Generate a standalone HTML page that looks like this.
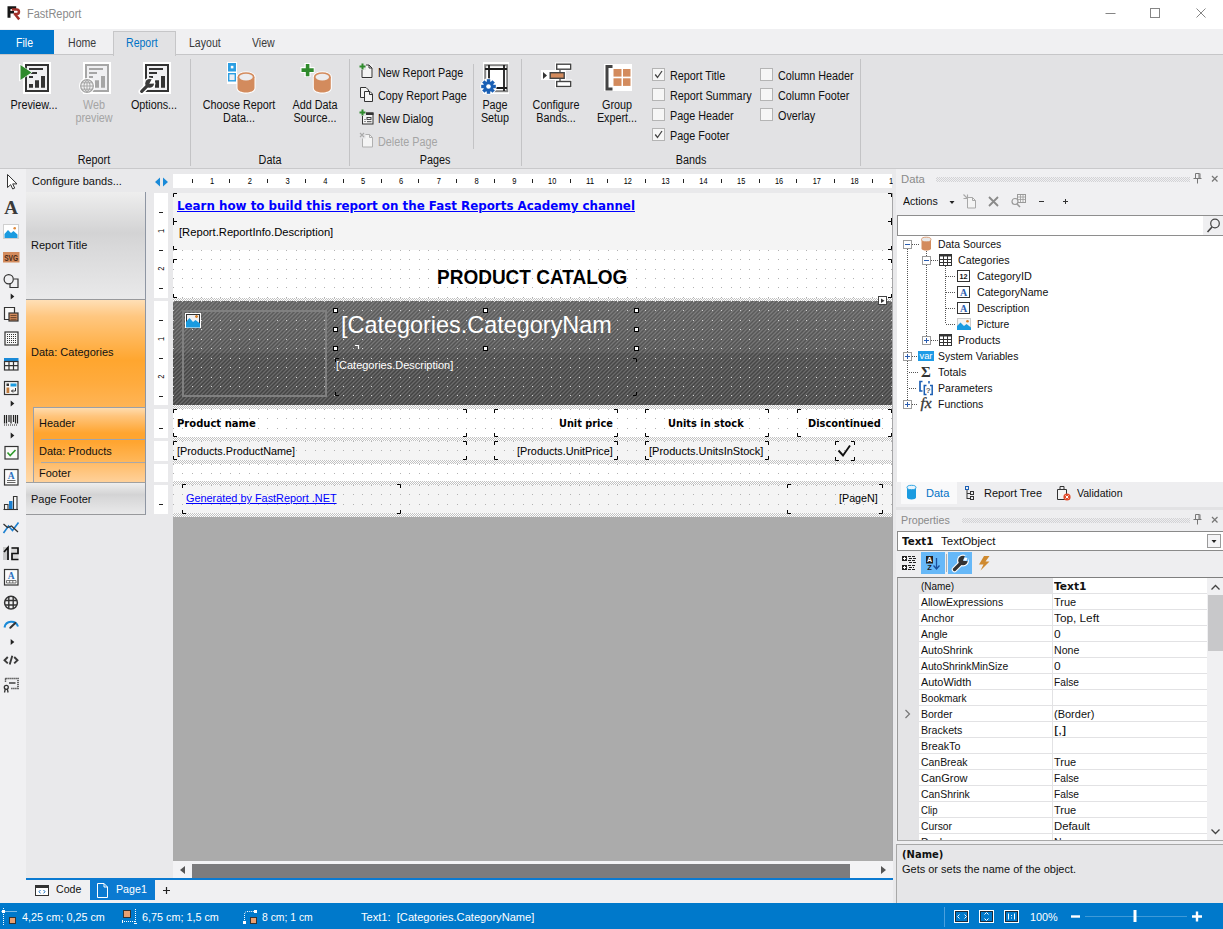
<!DOCTYPE html>
<html><head><meta charset="utf-8"><title>FastReport</title>
<style>
*{box-sizing:border-box;margin:0;padding:0}
html,body{width:1223px;height:929px;overflow:hidden;background:#e9e9eb}
body{position:relative;font-family:"Liberation Sans",sans-serif;font-size:11px;color:#000;line-height:1}
.a{position:absolute}
.t{position:absolute;white-space:nowrap}
svg{position:absolute;overflow:visible}

.c{position:absolute;white-space:nowrap;font-size:12px;color:#111;text-align:center;line-height:13px;transform:translateX(-50%) scaleX(.9)}
.l{position:absolute;white-space:nowrap;font-size:12px;color:#111;line-height:13px;transform:scaleX(.9);transform-origin:0 0}
.g{color:#a5a5a5}
.ih{fill:#fff}

.band{position:absolute;border-right:1px solid #8e96a3;border-bottom:1px solid #98999c}
.bg{background:linear-gradient(#eeeeee 0%,#d3d3d4 38%,#d8d8d9 50%,#e9e9ea 100%)}
.bo{background:linear-gradient(#ffdfb6 0%,#ffc57d 18%,#ffa530 55%,#ffa833 70%,#ffba5e 100%)}
.bt{position:absolute;white-space:nowrap;font-size:11px;color:#111;transform-origin:0 0}
.vr{position:absolute;left:154px;width:14px;background:#fff}
.hs{position:absolute;left:173px;width:719px;height:3px;background:repeating-conic-gradient(#c2c2c2 0 25%,#fff 0 50%) 0 0/2px 2px}

.dots{position:absolute;left:0;top:0;width:100%;height:100%}
.pb{position:absolute;left:173px;width:719px;overflow:hidden}
.dt{position:absolute;white-space:nowrap;font-size:10.670px;color:#000;transform-origin:0 50%}
.cm{position:absolute;width:4px;height:4px;border:0 solid #000}
.dj{font-family:"DejaVu Sans","Liberation Sans",sans-serif}
.pt{position:absolute;white-space:nowrap;font-size:11px;line-height:13px;color:#111;transform-origin:0 50%}
.grip{position:absolute;height:5px;background:repeating-conic-gradient(#d2d2d5 0 25%,transparent 0 50%) 0 0/2px 2px}
/* title */
#title{left:0;top:0;width:1223px;height:29px;background:#fff}
#tabs{z-index:2;left:0;top:29px;width:1223px;height:25px;background:#f0f0f2}
#ribbon{left:0;top:54px;width:1223px;height:115px;background:#e2e2e4;border-top:1px solid #c6c6c8;border-bottom:1px solid #c9c9cb}
.rt{position:absolute;white-space:nowrap;font-size:12px;color:#111;text-align:center;line-height:13px;transform:translateX(-50%)}
.rl{position:absolute;white-space:nowrap;font-size:12px;color:#111;line-height:13px}
.gray{color:#a3a3a3}
.sep{position:absolute;width:1px;background:#c3c3c5}
.cb{position:absolute;width:13px;height:13px;background:#f6f6f6;border:1px solid #b4b4b4}
#status{left:0;top:904px;width:1223px;height:25px;background:#0072c6;color:#fff}
</style></head><body>
<!--TITLE-->
<div id="title" class="a">
<svg style="left:6px;top:5px" width="16" height="16" viewBox="0 0 16 16"><path d="M1.500 1.300h8.700v2.700H4.500v2h3.500v2.600H4.500v4.200h-3z" fill="#161616"/><path d="M5.800 4.500h4.900a2.250 2.250 0 0 1 0 4.500h-3M8.900 9l4.300 5.400" fill="none" stroke="#a3312a" stroke-width="2.500"/></svg>
<span class="t" style="left:27px;top:8px;font-size:12.5px;color:#8a8a8a;transform:scaleX(.88);transform-origin:0 0">FastReport</span>
<svg style="left:1100px;top:0" width="123" height="29"><path d="M5.500 13.500h10" stroke="#858585" fill="none"/><rect x="50.500" y="8.500" width="9" height="9" stroke="#858585" fill="none"/><path d="M96.500 8.500l9 9m0-9l-9 9" stroke="#858585" fill="none"/></svg>
</div>
<!--TABS-->
<div id="tabs" class="a">
<div class="a" style="left:0;top:1px;width:54px;height:24px;background:#0077cc"></div>
<span class="t" style="left:16px;top:8px;font-size:12px;transform:scaleX(.88);transform-origin:0 0;color:#fff">File</span>
<span class="t" style="left:68px;top:8px;font-size:12px;transform:scaleX(.88);transform-origin:0 0;color:#3a3a3a">Home</span>
<div class="a" style="left:113px;top:2px;width:63px;height:25px;background:#e2e2e4;border:1px solid #c6c6c8;border-bottom:none"></div>
<span class="t" style="left:126px;top:8px;font-size:12px;transform:scaleX(.88);transform-origin:0 0;color:#0072c6">Report</span>
<span class="t" style="left:189px;top:8px;font-size:12px;transform:scaleX(.88);transform-origin:0 0;color:#3a3a3a">Layout</span>
<span class="t" style="left:252px;top:8px;font-size:12px;transform:scaleX(.88);transform-origin:0 0;color:#3a3a3a">View</span>
</div>
<!--RIBBON-->
<div id="ribbon" class="a">
<svg width="0" height="0" style="left:0;top:0"><defs>
<g id="rep"><rect x="4" y="0" width="28" height="32" fill="#fff"/><rect x="7" y="3" width="22" height="26" fill="#f0f0f2" stroke="currentColor" stroke-width="2"/><path d="M10 7h14M10 11h8M10 15h4" stroke="currentColor" stroke-width="1.800" fill="none"/><path d="M10 22h4v3.800h-4zM16 18.200h4v7.600h-4zM22 14h4v11.800h-4z" fill="currentColor"/></g>
<g id="cyl"><path d="M-1 5.500c0-7.500 19-7.500 19 0v11c0 7.500-19 7.500-19 0z" fill="#fff"/><path d="M0 5.500v11c0 6 17 6 17 0v-11z" fill="#d38b5d"/><ellipse cx="8.500" cy="5.500" rx="8.500" ry="4.800" fill="#d38b5d"/><ellipse cx="8.500" cy="5.600" rx="6.800" ry="3.400" fill="#ececee"/></g>
<g id="pg"><path d="M1.500 1.500h7l3 3v9.500h-10z" fill="#f4f4f4" stroke="currentColor"/><path d="M8.500 1.500v3h3" fill="none" stroke="currentColor"/></g>
<g id="plus"><path d="M2 0h2v2h2v2h-2v2h-2v-2h-2v-2h2z" fill="#2f8a2c"/></g>
</defs></svg>
<!-- group Report -->
<svg style="left:19px;top:7px;color:#333" width="32" height="32"><use href="#rep"/><path d="M0 1.500v18l13.500-9z" fill="#fff"/><path d="M1.500 3v15l11-7.500z" fill="#2f8a2c"/></svg>
<span class="c" style="left:34px;top:44px">Preview...</span>
<svg style="left:79px;top:7px;color:#a6a6a6" width="32" height="32"><use href="#rep"/><circle cx="8" cy="24" r="8" fill="#fff"/><circle cx="8" cy="24" r="6.300" fill="#f2f2f2" stroke="#a6a6a6" stroke-width="1.300"/><path d="M1.700 24h12.600M8 17.700v12.600M8 17.700c-4 3-4 9.600 0 12.600M8 17.700c4 3 4 9.600 0 12.600M2.800 20.800h10.400M2.800 27.200h10.400" stroke="#a6a6a6" fill="none" stroke-width="1"/></svg>
<span class="c g" style="left:94px;top:44px">Web<br>preview</span>
<svg style="left:139px;top:7px;color:#333" width="32" height="32"><use href="#rep"/><path d="M2.500 29.600l7-7" stroke="#fff" stroke-width="6" stroke-linecap="round"/><circle cx="10.600" cy="21.400" r="5.800" fill="#fff"/><path d="M2.700 29.400l7-7" stroke="#3a3a3a" stroke-width="3.200" stroke-linecap="round"/><circle cx="10.600" cy="21.400" r="4.400" fill="#3a3a3a"/><path d="M10.300 21.700l2.200-4.200 3.800 0.200 -0.600 3.700z" fill="#fff"/></svg>
<span class="c" style="left:154px;top:44px">Options...</span>
<span class="c" style="left:94px;top:99px">Report</span>
<div class="sep" style="left:190px;top:4px;height:107px"></div>
<!-- group Data -->
<svg style="left:224px;top:7px" width="32" height="32"><rect x="3" y="0" width="10" height="22" fill="#fff"/><rect x="4" y="1" width="8" height="8.500" fill="#2b9ee2"/><rect x="6.800" y="3.800" width="2.600" height="2.600" fill="#fff"/><rect x="4.700" y="11.700" width="6.600" height="7.100" fill="#e8eef4" stroke="#2b9ee2" stroke-width="1.400"/><use href="#cyl" x="13.500" y="9.500"/></svg>
<span class="c" style="left:239px;top:44px">Choose Report<br>Data...</span>
<svg style="left:300px;top:7px" width="32" height="32"><path d="M4.500 1h6v4h4v6h-4v4h-6v-4h-4v-6h4z" fill="#fff"/><path d="M5.800 2h3.600v4.300h4.300v3.600h-4.300v4.300h-3.600v-4.300h-4.300v-3.600h4.300z" fill="#2f8a2c"/><use href="#cyl" x="13.800" y="9.500"/></svg>
<span class="c" style="left:315px;top:44px">Add Data<br>Source...</span>
<span class="c" style="left:270px;top:99px">Data</span>
<div class="sep" style="left:349px;top:4px;height:107px"></div>
<!-- group Pages -->
<svg style="left:359px;top:8px;color:#333" width="16" height="16"><rect x="1" y="1" width="13" height="15" fill="#f1f1f1" opacity=".7"/><use href="#pg" x="1.500" y="0.500"/><rect x="0" y="0" width="7" height="7" fill="#e2e2e4"/><use href="#plus" x="0.500" y="0.500"/></svg>
<span class="l" style="left:378px;top:12px">New Report Page</span>
<svg style="left:359px;top:31px;color:#333" width="16" height="16"><path d="M1.500 1.500h5.500l2.500 2.500v7.500h-8z" fill="#f4f4f4" stroke="#333"/><path d="M5.500 5.500h5.500l2.500 2.500v7.500h-8z" fill="#f4f4f4" stroke="#333"/><path d="M10.500 5.500v3h3" fill="none" stroke="#333"/></svg>
<span class="l" style="left:378px;top:35px">Copy Report Page</span>
<svg style="left:359px;top:54px;color:#333" width="16" height="16"><rect x="3.500" y="4" width="10.500" height="11" fill="#f4f4f4" stroke="#333"/><rect x="3" y="3.500" width="11.500" height="2.500" fill="#333"/><path d="M5.500 10.500h1M5.500 12.500h1" stroke="#333"/><rect x="8" y="8.500" width="4" height="2" fill="none" stroke="#333" stroke-width=".9"/><path d="M8 12.700h4.500" stroke="#333" stroke-width=".9"/><rect x="0" y="0" width="7" height="7" fill="#e2e2e4"/><use href="#plus" x="0.500" y="0.500"/></svg>
<span class="l" style="left:378px;top:58px">New Dialog</span>
<svg style="left:359px;top:77px;color:#b0b0b0" width="16" height="16"><use href="#pg" x="2" y="1"/><rect x="0" y="0" width="6.500" height="6.500" fill="#e2e2e4"/><path d="M1 1l4 4M5 1l-4 4" stroke="#aaa" stroke-width="1.100"/></svg>
<span class="l g" style="left:378px;top:81px">Delete Page</span>
<div class="sep" style="left:473px;top:9px;height:85px"></div>
<svg style="left:479px;top:7px" width="32" height="32"><rect x="4" y="0" width="26" height="32" fill="#fff"/><rect x="6.200" y="3.200" width="22" height="26" fill="#fff" stroke="#858585" stroke-width="2"/><path d="M10 3v26M25 3v26M6 7h22M6 26h22" stroke="#1c1c1c" stroke-width="1.800" fill="none"/><circle cx="9.500" cy="24.500" r="8.300" fill="#fff"/><g transform="translate(9.500 24.500)" fill="#1a5fb4"><circle r="5.200"/><g id="tooth"><rect x="-1.700" y="-7.300" width="3.400" height="14.600"/></g><use href="#tooth" transform="rotate(45)"/><use href="#tooth" transform="rotate(90)"/><use href="#tooth" transform="rotate(135)"/><circle r="2.300" fill="#fff"/></g></svg>
<span class="c" style="left:495px;top:44px">Page<br>Setup</span>
<span class="c" style="left:435px;top:99px">Pages</span>
<div class="sep" style="left:521px;top:4px;height:107px"></div>
<!-- group Bands -->
<svg style="left:540px;top:7px" width="32" height="32"><rect x="15" y="0.500" width="17" height="8" fill="#fff"/><rect x="1" y="8" width="25" height="10" fill="#fff"/><rect x="15" y="17.500" width="17" height="8.500" fill="#fff"/><rect x="16.700" y="2.200" width="14" height="5" fill="#fff" stroke="#444" stroke-width="1.400"/><rect x="10.200" y="10.700" width="14" height="5.600" fill="#d38b5d" stroke="#444" stroke-width="1.400"/><rect x="16.700" y="19.500" width="14" height="5" fill="#fff" stroke="#444" stroke-width="1.400"/><path d="M3 10v7l4-3.500z" fill="#333"/><path d="M20 8v2.500M20 17v2" stroke="#444" stroke-width="1.200"/></svg>
<span class="c" style="left:556px;top:44px">Configure<br>Bands...</span>
<svg style="left:602px;top:7px" width="32" height="32"><rect x="2" y="2" width="28" height="27" fill="#fff"/><path d="M10.500 4.500h-5.500v22.500h5.500" fill="none" stroke="#444" stroke-width="3"/><rect x="11.500" y="7" width="8" height="7.600" fill="#d38b5d"/><rect x="21" y="7" width="7.500" height="7.600" fill="#d38b5d"/><rect x="11.500" y="16.300" width="8" height="7.600" fill="#d38b5d"/><rect x="21" y="16.300" width="7.500" height="7.600" fill="#d38b5d"/></svg>
<span class="c" style="left:617px;top:44px">Group<br>Expert...</span>
<div class="cb" style="left:652px;top:13px"></div><svg style="left:652px;top:13px" width="13" height="13"><path d="M3.200 6.500l2.300 3 4.500-6.500" fill="none" stroke="#444" stroke-width="1.300"/></svg>
<span class="l" style="left:670px;top:15px">Report Title</span>
<div class="cb" style="left:652px;top:33px"></div>
<span class="l" style="left:670px;top:35px">Report Summary</span>
<div class="cb" style="left:652px;top:53px"></div>
<span class="l" style="left:670px;top:55px">Page Header</span>
<div class="cb" style="left:652px;top:73px"></div><svg style="left:652px;top:73px" width="13" height="13"><path d="M3.200 6.500l2.300 3 4.500-6.500" fill="none" stroke="#444" stroke-width="1.300"/></svg>
<span class="l" style="left:670px;top:75px">Page Footer</span>
<div class="cb" style="left:760px;top:13px"></div>
<span class="l" style="left:778px;top:15px">Column Header</span>
<div class="cb" style="left:760px;top:33px"></div>
<span class="l" style="left:778px;top:35px">Column Footer</span>
<div class="cb" style="left:760px;top:53px"></div>
<span class="l" style="left:778px;top:55px">Overlay</span>
<span class="c" style="left:691px;top:99px">Bands</span>
<div class="sep" style="left:860px;top:4px;height:107px"></div>
</div>
<!--LEFTBAR-->
<div class="a" style="left:0;top:169px;width:26px;height:735px;background:#f0f0f2"></div>
<svg style="left:0;top:169px" width="26" height="735">
<!-- pointer -->
<path d="M7.500 5.500v13l3.200-2.800 2 4.300 2-.9-2-4.200h4.300z" fill="#fff" stroke="#333" stroke-width="1"/>
<!-- A -->
<text x="11" y="45" font-family="Liberation Serif,serif" font-weight="bold" font-size="19" text-anchor="middle" fill="#3a3a3a">A</text>
<!-- picture -->
<g id="pic"><rect x="3.500" y="55.500" width="15" height="14" fill="#fff" stroke="#d0d0d0"/><path d="M4.500 65l3.500-4 3 3 2.500-2 4 3.500v3.500h-13z" fill="#1a9be0"/><circle cx="14.700" cy="59.300" r="1.300" fill="#e08a3c"/></g>
<!-- svg -->
<rect x="3" y="83" width="16.500" height="10.500" fill="#d38b5d"/>
<text x="11.200" y="91.800" font-size="8.500" font-weight="bold" text-anchor="middle" fill="#4a2a18" textLength="14" lengthAdjust="spacingAndGlyphs">SVG</text>
<!-- shapes -->
<path d="M10 114v4.500h8v-8.500h-4" fill="none" stroke="#333" stroke-width="1.200"/><circle cx="8.700" cy="110.300" r="4.600" fill="#f0f0f2" stroke="#333" stroke-width="1.200"/>
<path d="M10.700 124.5v6l3.600-3z" fill="#222"/>
<!-- subreport -->
<path d="M4.500 138.500h10v12h-10z" fill="#f8f8f8" stroke="#333" stroke-width="1.200"/><rect x="9" y="144" width="9" height="8" fill="#d38b5d" stroke="#333" stroke-width="1.200"/><path d="M10.500 146.500h6M10.500 148.500h6M10.500 150.300h6" stroke="#5a3a22" stroke-width=".8"/>
<!-- grid -->
<rect x="5" y="163" width="13" height="13" fill="#f8f8f8" stroke="#333" stroke-width="1.200"/><path d="M7 165.500h9.500M7 167.500h9.500M7 169.500h9.500M7 171.500h9.500M7 173.500h9.500" stroke="#333" stroke-width="1" stroke-dasharray="1 1"/>
<!-- table -->
<rect x="4" y="189" width="14.500" height="3.500" fill="#1a8ad8"/><rect x="4.500" y="192.500" width="13.500" height="8.500" fill="#f8f8f8" stroke="#333" stroke-width="1.200"/><path d="M4.500 196.700h13.500M9 192.500v8.500M13.500 192.500v8.500" stroke="#333" stroke-width="1.200"/>
<!-- matrix -->
<rect x="4.500" y="212.500" width="13.500" height="13" fill="#f8f8f8" stroke="#333" stroke-width="1.200"/><rect x="6.500" y="214.500" width="2.500" height="2.500" fill="#333"/><rect x="10.500" y="214.500" width="6" height="3" fill="#1a9be0"/><rect x="6.500" y="218.500" width="2.800" height="5.500" fill="#c07a3c"/><path d="M15.500 219v3h-4m1.500-1.500l-1.500 1.500 1.500 1.500" fill="none" stroke="#333" stroke-width="1"/>
<path d="M10.700 231.5v6l3.600-3z" fill="#222"/>
<!-- barcode -->
<path d="M4.500 246v8.500M6.500 246v8.500M9 246v7M11 246v8.500M13.500 246v7M15.500 246v8.500M17.500 246v8.500" stroke="#222" stroke-width="1.200"/><path d="M4 256h14" stroke="#222" stroke-width="1" stroke-dasharray="1 1"/>
<path d="M10.700 263.5v6l3.600-3z" fill="#222"/>
<!-- checkbox -->
<rect x="5" y="277.500" width="13" height="12.500" fill="#fafafa" stroke="#333" stroke-width="1.200"/><path d="M7.500 283.500l2.700 3 5.300-5.500" fill="none" stroke="#2f9a2c" stroke-width="1.600"/>
<!-- rich text -->
<rect x="4.500" y="300.500" width="13.500" height="15.500" fill="#fafafa" stroke="#333" stroke-width="1.200"/><text x="11.200" y="310" font-family="Liberation Serif,serif" font-weight="bold" font-size="9.500" text-anchor="middle" fill="#2a6fc0">A</text><path d="M7 311.500h8.500M7 313.500h8.500" stroke="#555" stroke-width=".9"/>
<!-- chart -->
<path d="M4.500 340.500v-5h3.500v5" fill="#f8f8f8" stroke="#333" stroke-width="1.100"/><rect x="9" y="332" width="3.500" height="8.500" fill="#1a7fd0"/><path d="M13.500 340.500v-13h3.500v13" fill="#f8f8f8" stroke="#333" stroke-width="1.100"/><path d="M3.500 340.500h14.500" stroke="#333" stroke-width="1.100"/>
<!-- sparkline -->
<path d="M3.500 364l5-7 4 4.500 6-8" fill="none" stroke="#1a7fd0" stroke-width="1.600"/><path d="M3.500 355l4 3.500 4-1.500 6.500 6" fill="none" stroke="#333" stroke-width="1.300"/>
<!-- digits 12 -->
<rect x="3" y="378" width="6" height="13" fill="#c8c8c8"/><path d="M4 383l4-4.500v12.500" fill="none" stroke="#111" stroke-width="1.700"/><rect x="11" y="378" width="7.500" height="13" fill="#d8d8d8"/><path d="M11.500 379h6.500v5.500h-6v6h6.500" fill="none" stroke="#111" stroke-width="1.700"/>
<!-- cell text -->
<rect x="4.500" y="400.500" width="13.500" height="15.500" fill="#fafafa" stroke="#333" stroke-width="1.200"/><text x="11.200" y="410" font-family="Liberation Serif,serif" font-weight="bold" font-size="9.500" text-anchor="middle" fill="#2a6fc0">A</text><path d="M6.500 411.500h9.500v2.500h-9.500zM9.700 411.500v2.500M12.800 411.500v2.500" fill="none" stroke="#555" stroke-width=".8"/>
<!-- globe -->
<circle cx="11" cy="433.700" r="6.400" fill="none" stroke="#333" stroke-width="1.500"/><path d="M5 431.500h12M5 436h12M8.800 427.800v12M13.200 427.800v12" fill="none" stroke="#333" stroke-width="1.400"/>
<!-- gauge -->
<path d="M4.500 458.500a7 7 0 0 1 13.500-1" fill="none" stroke="#1a8ad8" stroke-width="2"/><path d="M10.300 458.800l5-4.800" stroke="#333" stroke-width="2" stroke-linecap="round"/>
<path d="M10.700 470.0v6l3.600-3z" fill="#222"/>
<!-- html -->
<path d="M7.800 488l-3.300 3.200 3.300 3.200M14.200 488l3.300 3.200-3.300 3.200M12.300 486.800l-2.600 8.800" fill="none" stroke="#3a3a3a" stroke-width="1.900"/>
<!-- cert -->
<path d="M5.500 509.500h12.500v10h-7" fill="none" stroke="#333" stroke-width="1.400" stroke-dasharray="1.200 .8"/><path d="M5.500 509.500v4" fill="none" stroke="#333" stroke-width="1.400" stroke-dasharray="1.200 .8"/><path d="M9 514h6.500" stroke="#333" stroke-width="1.400"/><circle cx="6.300" cy="518.300" r="2" fill="#f0f0f2" stroke="#333" stroke-width="1.300"/><path d="M5.300 520l-.8 3.500M7.300 520l.8 3.500" stroke="#333" stroke-width="1.300"/>
</svg>
<!--BANDS-->
<span class="bt" style="left:32px;top:176px">Configure bands...</span>
<svg style="left:154px;top:177px" width="16" height="10"><path d="M6 0.500v9l-5-4.500zM9 0.500v9l5-4.500z" fill="#1a8ad8"/></svg>
<div class="band bg" style="left:26px;top:192px;width:120px;height:108px"></div>
<span class="bt" style="left:31px;top:240px">Report Title</span>
<div class="band" style="left:26px;top:300px;width:120px;height:183px;border-bottom:none;background:linear-gradient(#ffdfb6 0%,#ffc780 9%,#ffa62f 33%,#ffab3d 45%,#ffb455 58%,#ffc079 80%,#ffd9a8 100%)"></div>
<span class="bt" style="left:31px;top:347px">Data: Categories</span>
<div class="band" style="left:33px;top:407px;width:113px;height:76px;border-left:1px solid #9aa0aa;border-top:1px solid #9aa0aa;border-bottom:none;background:linear-gradient(#ffdcae 0px,#ffc57d 8px,#ffa530 25px,#ffa530 34px,#ffb85c 55px,#ffbd6b 56px,#ffd39f 76px)"></div>
<div class="a" style="left:41px;top:439px;width:104px;height:1px;background:#a0a4ac"></div>
<div class="a" style="left:41px;top:462px;width:104px;height:1px;background:#a8a8ac"></div>
<span class="bt" style="left:39px;top:418px">Header</span>
<span class="bt" style="left:39px;top:446px">Data: Products</span>
<span class="bt" style="left:39px;top:468px">Footer</span>
<div class="band bg" style="left:26px;top:482px;width:120px;height:33px;border-top:1px solid #a0a0a0"></div>
<span class="bt" style="left:31px;top:494px">Page Footer</span>
<!--DESIGN-->
<div class="a" style="left:173px;top:174px;width:719px;height:14px;background:#fff"></div>
<svg style="left:0;top:174px" width="893" height="14"><path d="M192.5 5v4M229.5 5v4M267.5 5v4M305.5 5v4M343.5 5v4M381.5 5v4M418.5 5v4M456.5 5v4M494.5 5v4M532.5 5v4M570.5 5v4M607.5 5v4M645.5 5v4M683.5 5v4M721.5 5v4M759.5 5v4M796.5 5v4M834.5 5v4M872.5 5v4" stroke="#222" fill="none"/><text x="212.0" y="10" font-size="8.600" text-anchor="middle" fill="#000" textLength="4.2" lengthAdjust="spacingAndGlyphs">1</text><text x="249.8" y="10" font-size="8.600" text-anchor="middle" fill="#000" textLength="4.2" lengthAdjust="spacingAndGlyphs">2</text><text x="287.6" y="10" font-size="8.600" text-anchor="middle" fill="#000" textLength="4.2" lengthAdjust="spacingAndGlyphs">3</text><text x="325.4" y="10" font-size="8.600" text-anchor="middle" fill="#000" textLength="4.2" lengthAdjust="spacingAndGlyphs">4</text><text x="363.2" y="10" font-size="8.600" text-anchor="middle" fill="#000" textLength="4.2" lengthAdjust="spacingAndGlyphs">5</text><text x="401.0" y="10" font-size="8.600" text-anchor="middle" fill="#000" textLength="4.2" lengthAdjust="spacingAndGlyphs">6</text><text x="438.8" y="10" font-size="8.600" text-anchor="middle" fill="#000" textLength="4.2" lengthAdjust="spacingAndGlyphs">7</text><text x="476.6" y="10" font-size="8.600" text-anchor="middle" fill="#000" textLength="4.2" lengthAdjust="spacingAndGlyphs">8</text><text x="514.4" y="10" font-size="8.600" text-anchor="middle" fill="#000" textLength="4.2" lengthAdjust="spacingAndGlyphs">9</text><text x="552.2" y="10" font-size="8.600" text-anchor="middle" fill="#000" textLength="8.2" lengthAdjust="spacingAndGlyphs">10</text><text x="590.0" y="10" font-size="8.600" text-anchor="middle" fill="#000" textLength="8.2" lengthAdjust="spacingAndGlyphs">11</text><text x="627.8" y="10" font-size="8.600" text-anchor="middle" fill="#000" textLength="8.2" lengthAdjust="spacingAndGlyphs">12</text><text x="665.6" y="10" font-size="8.600" text-anchor="middle" fill="#000" textLength="8.2" lengthAdjust="spacingAndGlyphs">13</text><text x="703.4" y="10" font-size="8.600" text-anchor="middle" fill="#000" textLength="8.2" lengthAdjust="spacingAndGlyphs">14</text><text x="741.2" y="10" font-size="8.600" text-anchor="middle" fill="#000" textLength="8.2" lengthAdjust="spacingAndGlyphs">15</text><text x="779.0" y="10" font-size="8.600" text-anchor="middle" fill="#000" textLength="8.2" lengthAdjust="spacingAndGlyphs">16</text><text x="816.8" y="10" font-size="8.600" text-anchor="middle" fill="#000" textLength="8.2" lengthAdjust="spacingAndGlyphs">17</text><text x="854.6" y="10" font-size="8.600" text-anchor="middle" fill="#000" textLength="8.2" lengthAdjust="spacingAndGlyphs">18</text><text x="889" y="10" font-size="8.600" fill="#000" textLength="4.200" lengthAdjust="spacingAndGlyphs">1</text></svg>
<div class="vr" style="top:193px;height:105px"></div>
<div class="vr" style="top:301px;height:104px"></div>
<div class="vr" style="top:409px;height:29px"></div>
<div class="vr" style="top:441px;height:20px"></div>
<div class="vr" style="top:464px;height:18px"></div>
<div class="vr" style="top:485px;height:29px"></div>
<svg style="left:154px;top:0" width="14" height="600"><path d="M5 212.5h4" stroke="#222"/><text transform="translate(9.800 230.8) rotate(-90)" font-size="8.600" text-anchor="middle" fill="#000" textLength="4.200" lengthAdjust="spacingAndGlyphs">1</text><path d="M5 250.5h4" stroke="#222"/><text transform="translate(9.800 268.6) rotate(-90)" font-size="8.600" text-anchor="middle" fill="#000" textLength="4.200" lengthAdjust="spacingAndGlyphs">2</text><path d="M5 288.5h4" stroke="#222"/><path d="M5 320.5h4" stroke="#222"/><text transform="translate(9.800 338.8) rotate(-90)" font-size="8.600" text-anchor="middle" fill="#000" textLength="4.200" lengthAdjust="spacingAndGlyphs">1</text><path d="M5 358.5h4" stroke="#222"/><text transform="translate(9.800 376.6) rotate(-90)" font-size="8.600" text-anchor="middle" fill="#000" textLength="4.200" lengthAdjust="spacingAndGlyphs">2</text><path d="M5 396.5h4" stroke="#222"/><path d="M5 428.5h4" stroke="#222"/><path d="M5 504.5h4" stroke="#222"/></svg>
<div class="a" style="left:173px;top:193px;width:719px;height:324px;background:#fff"></div>
<svg style="left:0;top:0" width="0" height="0"><defs>
<pattern id="dl" x="173.500" y="301" width="9.450" height="9.450" patternUnits="userSpaceOnUse"><rect x="0" y="0" width="1" height="1" fill="#c4c4c4"/></pattern>
<pattern id="dd" x="173.500" y="301" width="9.450" height="9.450" patternUnits="userSpaceOnUse"><rect x="0" y="0" width="1" height="1" fill="#d0d0d0"/></pattern>
<pattern id="ht" width="4" height="4" patternUnits="userSpaceOnUse"><path d="M-1 1l2-2M-1 5l6-6M3 5l2-2" stroke="#fff" stroke-opacity=".2" stroke-width="1.300"/></pattern>
</defs></svg>
<div class="a" style="left:173px;top:193px;width:719px;height:57px;background:#f4f4f4"></div>
<div class="a" style="left:173px;top:301px;width:719px;height:52px;background:linear-gradient(#5e5e5e,#515151)"></div>
<div class="a" style="left:173px;top:353px;width:719px;height:52px;background:linear-gradient(#474747,#434343)"></div>
<div class="a" style="left:173px;top:441px;width:719px;height:20px;background:#f4f4f4"></div>
<div class="a" style="left:173px;top:485px;width:719px;height:28px;background:#f4f4f4"></div>
<div class="hs" style="top:298px"></div><div class="hs" style="top:405px;height:4px"></div><div class="hs" style="top:437px;height:4px"></div><div class="hs" style="top:460px;height:4px"></div><div class="hs" style="top:481px;height:4px"></div><div class="hs" style="top:513px;height:4px"></div>
<svg style="left:0;top:0" width="893" height="520"><rect x="173" y="301" width="719" height="104" fill="url(#ht)"/><defs><path id="dr" d="M0 .5h1m8 0h1m9 0h1m8 0h1m9 0h1m8 0h1m9 0h1m8 0h1m9 0h1m8 0h1m8 0h1m9 0h1m8 0h1m9 0h1m8 0h1m9 0h1m8 0h1m9 0h1m8 0h1m9 0h1m8 0h1m8 0h1m9 0h1m8 0h1m9 0h1m8 0h1m9 0h1m8 0h1m9 0h1m8 0h1m9 0h1m8 0h1m8 0h1m9 0h1m8 0h1m9 0h1m8 0h1m9 0h1m8 0h1m9 0h1m8 0h1m8 0h1m9 0h1m8 0h1m9 0h1m8 0h1m9 0h1m8 0h1m9 0h1m8 0h1m8 0h1m9 0h1m8 0h1m9 0h1m8 0h1m9 0h1m8 0h1m9 0h1m8 0h1m9 0h1m8 0h1m8 0h1m9 0h1m8 0h1m9 0h1m8 0h1m9 0h1m8 0h1m9 0h1m8 0h1m9 0h1m8 0h1m8 0h1m9 0h1m8 0h1m9 0h1m8 0h1" fill="none"/></defs><g stroke="#b2b2b2"><use href="#dr" x="173" y="250"/><use href="#dr" x="173" y="259"/><use href="#dr" x="173" y="269"/><use href="#dr" x="173" y="278"/><use href="#dr" x="173" y="287"/><use href="#dr" x="173" y="297"/></g><g stroke="#d4d4d4"><use href="#dr" x="173" y="301"/><use href="#dr" x="173" y="310"/><use href="#dr" x="173" y="320"/><use href="#dr" x="173" y="329"/><use href="#dr" x="173" y="339"/><use href="#dr" x="173" y="348"/><use href="#dr" x="173" y="358"/><use href="#dr" x="173" y="367"/><use href="#dr" x="173" y="377"/><use href="#dr" x="173" y="386"/><use href="#dr" x="173" y="395"/></g><g stroke="#b2b2b2"><use href="#dr" x="173" y="409"/><use href="#dr" x="173" y="418"/><use href="#dr" x="173" y="428"/></g><g stroke="#b2b2b2"><use href="#dr" x="173" y="441"/><use href="#dr" x="173" y="450"/></g><g stroke="#b2b2b2"><use href="#dr" x="173" y="464"/><use href="#dr" x="173" y="473"/></g><g stroke="#b2b2b2"><use href="#dr" x="173" y="485"/><use href="#dr" x="173" y="494"/><use href="#dr" x="173" y="504"/></g><rect x="183" y="311" width="143" height="85" fill="none" stroke="#808080" stroke-width="2"/><rect x="185" y="313" width="16" height="15" fill="#fff"/><rect x="186.500" y="314.500" width="13" height="12" fill="#f0f0f2" stroke="#333"/><path d="M186 322l3.500-4 3.500 4 2.500-2 4.500 3.500v4h-14z" fill="#1a9be0"/><path d="M196.500 315v3M195 316.500h3" stroke="#d9822b" stroke-width="1.400"/><path d="M173.5 197.0V193.5H177.0M888.0 193.5H891.5V197.0M173.5 218.0V221.5H177.0M888.0 221.5H891.5V218.0M173.5 225.0V221.5H177.0M888.0 221.5H891.5V225.0M173.5 246.0V249.5H177.0M888.0 249.5H891.5V246.0M173.5 263.0V259.5H177.0M888.0 259.5H891.5V263.0M173.5 294.0V297.5H177.0M888.0 297.5H891.5V294.0M335.5 362.0V358.5H339.0M633.0 358.5H636.5V362.0M335.5 392.0V395.5H339.0M633.0 395.5H636.5V392.0M173.5 413.0V409.5H177.0M463.0 409.5H466.5V413.0M173.5 433.0V436.5H177.0M463.0 436.5H466.5V433.0M494.5 413.0V409.5H498.0M614.0 409.5H617.5V413.0M494.5 433.0V436.5H498.0M614.0 436.5H617.5V433.0M645.5 413.0V409.5H649.0M765.0 409.5H768.5V413.0M645.5 433.0V436.5H649.0M765.0 436.5H768.5V433.0M797.5 413.0V409.5H801.0M888.0 409.5H891.5V413.0M797.5 433.0V436.5H801.0M888.0 436.5H891.5V433.0M173.5 445.0V441.5H177.0M463.0 441.5H466.5V445.0M173.5 456.0V459.5H177.0M463.0 459.5H466.5V456.0M494.5 445.0V441.5H498.0M614.0 441.5H617.5V445.0M494.5 456.0V459.5H498.0M614.0 459.5H617.5V456.0M645.5 445.0V441.5H649.0M765.0 441.5H768.5V445.0M645.5 456.0V459.5H649.0M765.0 459.5H768.5V456.0M835.5 445.0V441.5H839.0M851.0 441.5H854.5V445.0M835.5 457.0V460.5H839.0M851.0 460.5H854.5V457.0M182.5 488.0V484.5H186.0M397.0 484.5H400.5V488.0M182.5 510.0V513.5H186.0M397.0 513.5H400.5V510.0M787.5 488.0V484.5H791.0M879.0 484.5H882.5V488.0M787.5 510.0V513.5H791.0M879.0 513.5H882.5V510.0" stroke="#000" fill="none"/><rect x="333.5" y="308.5" width="4" height="4" fill="#fff" stroke="#000"/><rect x="333.5" y="327.5" width="4" height="4" fill="#fff" stroke="#000"/><rect x="333.5" y="346.5" width="4" height="4" fill="#fff" stroke="#000"/><rect x="483.5" y="308.5" width="4" height="4" fill="#fff" stroke="#000"/><rect x="483.5" y="346.5" width="4" height="4" fill="#fff" stroke="#000"/><rect x="634.5" y="308.5" width="4" height="4" fill="#fff" stroke="#000"/><rect x="634.5" y="327.5" width="4" height="4" fill="#fff" stroke="#000"/><rect x="634.5" y="346.5" width="4" height="4" fill="#fff" stroke="#000"/><path d="M355 345.500h3.500v3.500" stroke="#fff" fill="none" stroke-width="1.200"/><rect x="878.500" y="296.500" width="8" height="8" fill="#fff" stroke="#444"/><path d="M881 298.500v4.500l3.500-2.250z" fill="#333"/><path d="M838.500 450.500l4.500 5 7-10" fill="none" stroke="#111" stroke-width="1.900"/></svg>
<span class="dt dj" id="d1" style="left:177px;top:201px;font-size:11.500px;font-weight:bold;color:#0000ff;text-decoration:underline;transform:scaleX(1.031)">Learn how to build this report on the Fast Reports Academy channel</span>
<span class="dt" id="d2" style="left:178.7px;top:227px;transform:scaleX(1.050)">[Report.ReportInfo.Description]</span>
<span class="dt" id="d3" style="left:437px;top:267.400px;font-size:20px;font-weight:bold;transform:scaleX(0.950)">PRODUCT CATALOG</span>
<div class="a" style="left:336px;top:311px;width:276px;height:37px;overflow:hidden"><span class="dt" id="d4" style="left:5px;top:2px;font-size:24px;color:#fff;transform:scaleX(0.976)">[Categories.CategoryNam</span></div>
<span class="dt" id="d5" style="left:336px;top:359.500px;color:#fff;transform:scaleX(1.031)">[Categories.Description]</span>
<span class="dt dj" id="d6" style="left:176.5px;top:418.500px;font-weight:bold;transform:scaleX(0.939)">Product name</span>
<span class="dt dj" id="d7" style="left:559.4px;top:418.500px;font-weight:bold;transform:scaleX(0.915)">Unit price</span>
<span class="dt dj" id="d8" style="left:668.3px;top:418.500px;font-weight:bold;transform:scaleX(0.921)">Units in stock</span>
<span class="dt dj" id="d9" style="left:807.5px;top:418.500px;font-weight:bold;transform:scaleX(0.924)">Discontinued</span>
<span class="dt" id="d10" style="left:176.5px;top:446px;transform:scaleX(1.017)">[Products.ProductName]</span>
<span class="dt" id="d11" style="left:516.8px;top:446px;transform:scaleX(1.017)">[Products.UnitPrice]</span>
<span class="dt" id="d12" style="left:649.2px;top:446px;transform:scaleX(1.033)">[Products.UnitsInStock]</span>
<span class="dt" id="d13" style="left:185.6px;top:493px;color:#0000ff;text-decoration:underline;transform:scaleX(1.021)">Generated by FastReport .NET</span>
<span class="dt" id="d14" style="left:838.6px;top:493px;transform:scaleX(1.008)">[PageN]</span>
<div class="a" style="left:173px;top:517px;width:719px;height:344px;background:#ababab"></div>
<!--DATA-->
<div class="a" style="left:892px;top:193px;width:1px;height:668px;background:#a6a6a8"></div>
<div class="a" style="left:893px;top:169px;width:3px;height:735px;background:#e9e9eb"></div>
<div class="a" style="left:896px;top:169px;width:327px;height:46px;background:#f0f0f2"></div>
<span class="pt" id="p1" style="left:901.4px;top:172.500px;color:#8a8a8a;transform:scaleX(1.026)">Data</span>
<div class="grip" style="left:936px;top:177px;width:254px"></div>
<svg style="left:1190px;top:172px" width="33" height="14"><path d="M5.500 1.500h4M5.500 1.500v5M9 1.500v5M10 1.500v5M3.500 6.500h8M7.500 7v4.500" stroke="#777" fill="none"/><path d="M22 4l5.500 5.500M27.500 4l-5.500 5.500" stroke="#777" stroke-width="1.200" fill="none"/></svg>
<span class="pt" id="p2" style="left:902.8px;top:194.500px;transform:scaleX(0.961)">Actions</span>
<svg style="left:945px;top:192px" width="135" height="18"><path d="M4.500 9l2.500 3 2.500-3z" fill="#222"/><g stroke="#a8a8a8" fill="none"><path d="M22.500 5.500h5l3 3v7.500h-8z" fill="#f4f4f4"/><path d="M27.500 5.500v3h3"/><path d="M18.500 2.500l4 4M22.500 2.500v4h-4" stroke-width="1.100"/></g><path d="M44 5l9 9M53 5l-9 9" stroke="#8a8a8a" stroke-width="1.800" fill="none"/><g stroke="#9a9a9a" fill="none"><rect x="72.500" y="2.500" width="8" height="8" fill="#f4f4f4"/><path d="M72.500 5h8M72.500 7.500h8M75.500 2.500v8M78 2.500v8" stroke-width=".8"/><circle cx="70" cy="9.500" r="3" fill="#f0f0f2" stroke-width="1.200"/><path d="M72 12l3 3" stroke-width="1.600"/></g><path d="M94 9.500h5" stroke="#333"/><path d="M118 9.500h5M120.500 7v5" stroke="#333"/></svg>
<div class="a" style="left:897px;top:215px;width:326px;height:21px;background:#fff;border:1px solid #8e8e8e;border-right:none"></div>
<div class="a" style="left:1203px;top:216px;width:20px;height:19px;background:#efeff1"></div>
<svg style="left:1203px;top:216px" width="20" height="19"><circle cx="12" cy="7.500" r="4.300" fill="none" stroke="#444" stroke-width="1.200"/><path d="M9 11l-4.500 5" stroke="#444" stroke-width="1.600"/></svg>
<div class="a" style="left:897px;top:236px;width:326px;height:246px;background:#fff"></div>
<svg style="left:897px;top:236px" width="326" height="246"><path d="M10.5 13V168" stroke="#555" stroke-dasharray="1 1" fill="none"/><path d="M29.5 15V104" stroke="#555" stroke-dasharray="1 1" fill="none"/><path d="M48.5 30V88" stroke="#555" stroke-dasharray="1 1" fill="none"/><path d="M15 8.5H22" stroke="#555" stroke-dasharray="1 1" fill="none"/><path d="M34 24.5H41M34 104.5H41" stroke="#555" stroke-dasharray="1 1" fill="none"/><path d="M49 40.5H59" stroke="#555" stroke-dasharray="1 1" fill="none"/><path d="M49 56.5H59" stroke="#555" stroke-dasharray="1 1" fill="none"/><path d="M49 72.5H59" stroke="#555" stroke-dasharray="1 1" fill="none"/><path d="M49 88.5H59" stroke="#555" stroke-dasharray="1 1" fill="none"/><path d="M15 120.5H20M12 136.5H22M12 152.5H20M15 168.5H20" stroke="#555" stroke-dasharray="1 1" fill="none"/><rect x="6.5" y="4.5" width="8" height="8" fill="#fff" stroke="#9b9b9b"/><path d="M8 8.5h5" stroke="#2a5db0"/><rect x="25.5" y="20.5" width="8" height="8" fill="#fff" stroke="#9b9b9b"/><path d="M27 24.5h5" stroke="#2a5db0"/><rect x="25.5" y="100.5" width="8" height="8" fill="#fff" stroke="#9b9b9b"/><path d="M27 104.5h5" stroke="#2a5db0"/><path d="M29.5 102v5" stroke="#2a5db0"/><rect x="6.5" y="116.5" width="8" height="8" fill="#fff" stroke="#9b9b9b"/><path d="M8 120.5h5" stroke="#2a5db0"/><path d="M10.5 118v5" stroke="#2a5db0"/><rect x="6.5" y="164.5" width="8" height="8" fill="#fff" stroke="#9b9b9b"/><path d="M8 168.5h5" stroke="#2a5db0"/><path d="M10.5 166v5" stroke="#2a5db0"/><g transform="translate(24.5 1)"><path d="M0 2.500v9c0 2.800 9.500 2.800 9.500 0v-9z" fill="#d38b5d"/><ellipse cx="4.750" cy="2.500" rx="4.750" ry="2.300" fill="#e9e9ea" stroke="#d38b5d" stroke-width=".8"/></g><g transform="translate(42 18)"><rect x="0" y="0" width="13" height="3" fill="#333"/><rect x=".5" y=".5" width="12" height="11" fill="#fff" stroke="#333"/><rect x="0" y="0" width="13" height="2.500" fill="#333"/><path d="M0 5.500h13M0 8.500h13M4.500 2v10M8.500 2v10" stroke="#333"/></g><g transform="translate(42 98)"><rect x="0" y="0" width="13" height="3" fill="#333"/><rect x=".5" y=".5" width="12" height="11" fill="#fff" stroke="#333"/><rect x="0" y="0" width="13" height="2.500" fill="#333"/><path d="M0 5.500h13M0 8.500h13M4.500 2v10M8.500 2v10" stroke="#333"/></g><rect x="60.5" y="34.5" width="12" height="11" fill="#fff" stroke="#333"/><text x="66.5" y="43.3" font-size="7.500" font-weight="bold" text-anchor="middle" fill="#111" textLength="8" lengthAdjust="spacingAndGlyphs">12</text><rect x="60.5" y="50.5" width="12" height="11" fill="#fff" stroke="#333"/><text x="66.5" y="59.8" font-family="Liberation Serif,serif" font-size="10" font-weight="bold" text-anchor="middle" fill="#2a5db0">A</text><rect x="60.5" y="66.5" width="12" height="11" fill="#fff" stroke="#333"/><text x="66.5" y="75.8" font-family="Liberation Serif,serif" font-size="10" font-weight="bold" text-anchor="middle" fill="#2a5db0">A</text><g transform="translate(60 82)"><rect x=".5" y=".5" width="13" height="11" fill="#f4f4f4" stroke="#ccc"/><path d="M0 8l3.500-3.500 3.500 3.500 2.500-2 4.500 3.500v2.500h-14z" fill="#1a9be0"/><circle cx="10.500" cy="3.300" r="1.300" fill="#d9822b"/></g><rect x="21" y="115" width="16" height="10" fill="#1e9be6"/><text x="29" y="123" font-size="9" text-anchor="middle" fill="#fff" textLength="13" lengthAdjust="spacingAndGlyphs">var</text><text x="29" y="141" font-family="Liberation Serif,serif" font-size="15" font-weight="bold" text-anchor="middle" fill="#333">Σ</text><path d="M25.5 145.5h-2.500v9.500h2.500" fill="none" stroke="#1c5fb4" stroke-width="1.700"/><path d="M29.5 149.5h-2.200v9h2.200M33 149.5h2.200v9h-2.200M32 145v2.500" fill="none" stroke="#1c5fb4" stroke-width="1.500"/><text x="31.299999999999955" y="157.3" font-size="8" font-weight="bold" text-anchor="middle" fill="#666">?</text><text x="29" y="172" font-family="Liberation Serif,serif" font-size="15.500" font-style="italic" text-anchor="middle" fill="#333" stroke="#333" stroke-width=".3">fx</text></svg>
<span class="pt" id="t0" style="left:938.4px;top:237.5px;transform:scaleX(0.949)">Data Sources</span>
<span class="pt" id="t1" style="left:957.6px;top:253.5px;transform:scaleX(0.970)">Categories</span>
<span class="pt" id="t2" style="left:976.7px;top:269.5px;transform:scaleX(0.986)">CategoryID</span>
<span class="pt" id="t3" style="left:976.7px;top:285.5px;transform:scaleX(0.964)">CategoryName</span>
<span class="pt" id="t4" style="left:976.7px;top:301.5px;transform:scaleX(0.951)">Description</span>
<span class="pt" id="t5" style="left:976.7px;top:317.5px;transform:scaleX(0.944)">Picture</span>
<span class="pt" id="t6" style="left:957.6px;top:333.5px;transform:scaleX(0.974)">Products</span>
<span class="pt" id="t7" style="left:938.4px;top:349.5px;transform:scaleX(0.948)">System Variables</span>
<span class="pt" id="t8" style="left:938.4px;top:365.5px;transform:scaleX(0.986)">Totals</span>
<span class="pt" id="t9" style="left:938.4px;top:381.5px;transform:scaleX(0.958)">Parameters</span>
<span class="pt" id="t10" style="left:938.4px;top:397.5px;transform:scaleX(0.950)">Functions</span>
<div class="a" style="left:896px;top:482px;width:327px;height:22px;background:#eeeef0"></div>
<div class="a" style="left:901px;top:482px;width:56px;height:22px;background:#f9f9fa"></div>
<svg style="left:897px;top:482px" width="326" height="22"><path d="M10 5.500v10c0 2.500 9 2.500 9 0v-10z" fill="#1a9be0"/><ellipse cx="14.500" cy="5.500" rx="4.500" ry="2.200" fill="#e8f4fc" stroke="#1a9be0" stroke-width=".9"/><g fill="none" stroke="#333"><rect x="68.500" y="4.500" width="3" height="3" stroke="#1a5fb4"/><path d="M70 8v9M70 11.500h3M70 16.500h3"/><rect x="73.500" y="9.500" width="3" height="3"/><rect x="73.500" y="14.500" width="3" height="3"/></g><g fill="none" stroke="#333"><path d="M160.500 7.500h9v10h-9z" fill="#f4f4f4"/><path d="M163 7v-2.500h4v2.500"/></g><circle cx="170" cy="15" r="3.600" fill="#e04a2a"/><path d="M168.500 13.500l3 3M171.500 13.500l-3 3" stroke="#fff" stroke-width="1"/></svg>
<span class="pt" id="b1" style="left:926.4px;top:487px;color:#0072c6;transform:scaleX(1.004)">Data</span>
<span class="pt" id="b2" style="left:984px;top:487px;transform:scaleX(1.000)">Report Tree</span>
<span class="pt" id="b3" style="left:1077px;top:487px;transform:scaleX(0.958)">Validation</span>
<!--PROPS-->
<div class="a" style="left:896px;top:504px;width:327px;height:3px;background:#eeeef0"></div><div class="a" style="left:896px;top:507px;width:327px;height:3px;background:#e2e2e4"></div>
<div class="a" style="left:896px;top:510px;width:327px;height:394px;background:#eeeef0"></div>
<span class="pt" id="q1" style="left:901.4px;top:514px;color:#8a8a8a;transform:scaleX(0.972)">Properties</span>
<div class="grip" style="left:962px;top:518px;width:228px"></div>
<svg style="left:1190px;top:513px" width="33" height="14"><path d="M5.500 1.500h4M5.500 1.500v5M9 1.500v5M10 1.500v5M3.500 6.500h8M7.500 7v4.500" stroke="#777" fill="none"/><path d="M22 4l5.500 5.500M27.500 4l-5.500 5.500" stroke="#777" stroke-width="1.200" fill="none"/></svg>
<div class="a" style="left:897px;top:531px;width:326px;height:20px;background:#fff;border:1px solid #8a8a8a;border-right:none"></div>
<span class="pt dj" id="q2" style="left:902px;top:534.500px;font-weight:bold;font-size:10.500px;transform:scaleX(0.984)">Text1</span>
<span class="pt" id="q3" style="left:941px;top:534.500px;transform:scaleX(1.048)">TextObject</span>
<div class="a" style="left:1207px;top:534px;width:14px;height:14px;background:#f4f4f6;border:1px solid #9a9a9a"></div>
<svg style="left:1207px;top:534px" width="14" height="14"><path d="M4.500 6l2.500 3 2.500-3z" fill="#222"/></svg>
<div class="a" style="left:921px;top:552px;width:24px;height:22px;background:#66b8f8"></div>
<div class="a" style="left:946px;top:554px;width:1px;height:18px;background:#b0b0b0"></div>
<div class="a" style="left:948px;top:552px;width:24px;height:22px;background:#66b8f8"></div>
<svg style="left:897px;top:552px" width="110" height="22"><g fill="#222"><rect x="5" y="4" width="5" height="5"/><rect x="5" y="13" width="5" height="5"/></g><path d="M6 6.500h3M7.500 5v3M6 15.500h3M7.500 14v3" stroke="#fff"/><path d="M11 4.500h7M12 6.500h7M11 8.500h8M12 10.500h7M11 13.500h7M12 15.500h5M11 17.500h8" stroke="#222" stroke-dasharray="3 1"/><rect x="29" y="4" width="7" height="7.500" fill="#222"/><text x="32.500" y="10.300" font-size="7" font-weight="bold" text-anchor="middle" fill="#fff">A</text><text x="32.500" y="18.300" font-size="7.500" font-weight="bold" text-anchor="middle" fill="#222">Z</text><path d="M39.500 6v11M36.500 13.500l3 3.500 3-3.500" stroke="#1c4f9c" fill="none" stroke-width="1.300"/><path d="M57.500 17.500l6.500-6.500" stroke="#fff" stroke-width="5.500" stroke-linecap="round"/><circle cx="66" cy="8.500" r="6" fill="#fff"/><path d="M57.500 17.500l6.500-6.500" stroke="#333" stroke-width="3.400" stroke-linecap="round"/><circle cx="66" cy="8.500" r="4.800" fill="#333"/><path d="M66 8.800l2-5.500 4.500 1.200-1.500 4.800z" fill="#66b8f8"/><path d="M66.200 8.600l1.600-3.200 2.600.7-1 2.700z" fill="#fff"/><path d="M87 4L92.500 4L88.500 9.500L92.500 9.500L83.500 18.500L86.500 12.500L82 12.500Z" fill="#cf8a30"/></svg>
<div class="a" style="left:897px;top:577px;width:326px;height:264px;background:#fff;border-top:1px solid #7f7f7f;border-left:1px solid #9a9a9a;border-bottom:1px solid #a8a8a8;overflow:hidden">
<div class="a" style="left:0;top:0;width:21px;height:264px;background:#e4e4e6"></div>
<div class="a" style="left:21px;top:0;width:133px;height:16px;background:#e4e4e6"></div>
<span class="pt" id="n0" style="left:23.0px;top:1.5px;transform:scaleX(0.905)">(Name)</span><span class="pt dj" id="v0" style="left:156.0px;top:1.5px;font-weight:bold;font-size:10.500px;transform:scaleX(1.016)">Text1</span>
<span class="pt" id="n1" style="left:23.0px;top:17.5px;transform:scaleX(0.953)">AllowExpressions</span><span class="pt" id="v1" style="left:156.0px;top:17.5px;transform:scaleX(1.000)">True</span>
<span class="pt" id="n2" style="left:23.0px;top:33.5px;transform:scaleX(0.943)">Anchor</span><span class="pt" id="v2" style="left:156.0px;top:33.5px;transform:scaleX(1.071)">Top, Left</span>
<span class="pt" id="n3" style="left:23.0px;top:49.5px;transform:scaleX(0.946)">Angle</span><span class="pt" id="v3" style="left:156.0px;top:49.5px;transform:scaleX(1.083)">0</span>
<span class="pt" id="n4" style="left:23.0px;top:65.5px;transform:scaleX(0.963)">AutoShrink</span><span class="pt" id="v4" style="left:156.0px;top:65.5px;transform:scaleX(0.962)">None</span>
<span class="pt" id="n5" style="left:23.0px;top:81.5px;transform:scaleX(0.938)">AutoShrinkMinSize</span><span class="pt" id="v5" style="left:156.0px;top:81.5px;transform:scaleX(1.083)">0</span>
<span class="pt" id="n6" style="left:23.0px;top:97.5px;transform:scaleX(0.990)">AutoWidth</span><span class="pt" id="v6" style="left:156.0px;top:97.5px;transform:scaleX(0.926)">False</span>
<span class="pt" id="n7" style="left:23.0px;top:113.5px;transform:scaleX(0.920)">Bookmark</span>
<span class="pt" id="n8" style="left:23.0px;top:129.5px;transform:scaleX(0.955)">Border</span><span class="pt" id="v8" style="left:156.0px;top:129.5px;transform:scaleX(1.000)">(Border)</span>
<span class="pt" id="n9" style="left:23.0px;top:145.5px;transform:scaleX(0.965)">Brackets</span><span class="pt" id="v9" style="left:156.0px;top:145.5px;transform:scaleX(1.333)">[,]</span>
<span class="pt" id="n10" style="left:23.0px;top:161.5px;transform:scaleX(0.975)">BreakTo</span>
<span class="pt" id="n11" style="left:23.0px;top:177.5px;transform:scaleX(0.949)">CanBreak</span><span class="pt" id="v11" style="left:156.0px;top:177.5px;transform:scaleX(1.000)">True</span>
<span class="pt" id="n12" style="left:23.0px;top:193.5px;transform:scaleX(1.000)">CanGrow</span><span class="pt" id="v12" style="left:156.0px;top:193.5px;transform:scaleX(0.926)">False</span>
<span class="pt" id="n13" style="left:23.0px;top:209.5px;transform:scaleX(0.951)">CanShrink</span><span class="pt" id="v13" style="left:156.0px;top:209.5px;transform:scaleX(0.926)">False</span>
<span class="pt" id="n14" style="left:23.0px;top:225.5px;transform:scaleX(0.868)">Clip</span><span class="pt" id="v14" style="left:156.0px;top:225.5px;transform:scaleX(1.000)">True</span>
<span class="pt" id="n15" style="left:23.0px;top:241.5px;transform:scaleX(0.939)">Cursor</span><span class="pt" id="v15" style="left:156.0px;top:241.5px;transform:scaleX(1.029)">Default</span>
<span class="pt" id="n16" style="left:23.0px;top:257.5px;transform:scaleX(0.960)">Dock</span><span class="pt" id="v16" style="left:156.0px;top:257.5px;transform:scaleX(0.962)">None</span>
<div class="a" style="left:21px;top:15px;width:288px;height:1px;background:#e2e2e4"></div><div class="a" style="left:21px;top:31px;width:288px;height:1px;background:#e2e2e4"></div><div class="a" style="left:21px;top:47px;width:288px;height:1px;background:#e2e2e4"></div><div class="a" style="left:21px;top:63px;width:288px;height:1px;background:#e2e2e4"></div><div class="a" style="left:21px;top:79px;width:288px;height:1px;background:#e2e2e4"></div><div class="a" style="left:21px;top:95px;width:288px;height:1px;background:#e2e2e4"></div><div class="a" style="left:21px;top:111px;width:288px;height:1px;background:#e2e2e4"></div><div class="a" style="left:21px;top:127px;width:288px;height:1px;background:#e2e2e4"></div><div class="a" style="left:21px;top:143px;width:288px;height:1px;background:#e2e2e4"></div><div class="a" style="left:21px;top:159px;width:288px;height:1px;background:#e2e2e4"></div><div class="a" style="left:21px;top:175px;width:288px;height:1px;background:#e2e2e4"></div><div class="a" style="left:21px;top:191px;width:288px;height:1px;background:#e2e2e4"></div><div class="a" style="left:21px;top:207px;width:288px;height:1px;background:#e2e2e4"></div><div class="a" style="left:21px;top:223px;width:288px;height:1px;background:#e2e2e4"></div><div class="a" style="left:21px;top:239px;width:288px;height:1px;background:#e2e2e4"></div><div class="a" style="left:21px;top:255px;width:288px;height:1px;background:#e2e2e4"></div><div class="a" style="left:21px;top:271px;width:288px;height:1px;background:#e2e2e4"></div>
<div class="a" style="left:154px;top:0;width:1px;height:264px;background:#e2e2e4"></div>
<div class="a" style="left:309px;top:0;width:17px;height:264px;background:#f0f0f2"></div>
<div class="a" style="left:310px;top:17px;width:15px;height:56px;background:#c8c8ca"></div>
<svg style="left:309px;top:0" width="17" height="264"><path d="M4.500 11.500l4-4 4 4M4.500 251.500l4 4 4-4" fill="none" stroke="#444" stroke-width="1.300"/></svg>
<svg style="left:0;top:0" width="21" height="264"><path d="M7.500 132l4 4-4 4" fill="none" stroke="#777" stroke-width="1.200"/></svg>
</div>
<div class="a" style="left:896px;top:844px;width:327px;height:60px;background:#e6e6e8;border-top:1px solid #a8a8a8;border-left:1px solid #a8a8a8"></div>
<span class="pt dj" id="q4" style="left:901.9px;top:848px;font-weight:bold;font-size:10.500px;transform:scaleX(0.950)">(Name)</span>
<span class="pt" id="q5" style="left:901.9px;top:862.500px;transform:scaleX(0.999)">Gets or sets the name of the object.</span>
<!--BOTTOM-->
<div class="a" style="left:173px;top:861px;width:720px;height:17px;background:#f3f3f5"></div>
<div class="a" style="left:192px;top:864px;width:658px;height:14px;background:#7c7c7e"></div>
<svg style="left:173px;top:863px" width="720" height="14"><path d="M12 3v8l-5-4zM708 3v8l5-4z" fill="#555"/></svg>
<div class="a" style="left:26px;top:878px;width:867px;height:26px;background:#f0f0f2;border-top:2px solid #0b7ad1"></div>
<div class="a" style="left:90px;top:880px;width:65px;height:20px;background:#0b7ad1"></div>
<svg style="left:26px;top:878.500px" width="160" height="24"><rect x="9.500" y="6.500" width="13" height="10" fill="#fff" stroke="#333"/><rect x="9" y="6" width="14" height="3" fill="#333"/><path d="M14.500 11l-1.500 1.700 1.500 1.700M17.500 11l1.500 1.700-1.500 1.700" fill="none" stroke="#1a6fc0" stroke-width="1"/><path d="M71.500 4.500h6.500l3.500 3.500v10.500h-10z" fill="#0b7ad1" stroke="#fff"/><path d="M78 4.500v3.500h3.500" fill="none" stroke="#fff"/><path d="M137 11.500h7M140.500 8v7" stroke="#222" stroke-width="1.200"/></svg>
<span class="pt" id="c1" style="left:56px;top:882.500px;transform:scaleX(0.962)">Code</span>
<span class="pt" id="c2" style="left:116px;top:882.500px;color:#fff;transform:scaleX(0.969)">Page1</span>
<div class="a" style="left:0;top:903px;width:1223px;height:26px;background:#0079cb"></div>
<svg style="left:0;top:903px" width="1223" height="26"><g fill="none" stroke="#fff"><path d="M1.500 8.500h15M3.500 5v17" stroke-dasharray="1 1"/><rect x="9.500" y="14.500" width="6" height="6" fill="#e9a070" stroke="#333"/><rect x="2" y="7" width="3" height="3" fill="#fff" stroke="none"/></g><g fill="none" stroke="#fff"><rect x="123.500" y="7.500" width="7" height="7" fill="#e9a070" stroke="#333"/><path d="M122 18.500h14M135.500 6v15" stroke-dasharray="1 1"/><path d="M122.500 17v3M134 20.500h3" /></g><g fill="none" stroke="#fff"><path d="M244.500 21v-9c0-3 1-3.500 4-3.500h8" stroke-dasharray="1 1"/><rect x="250.500" y="14.500" width="6" height="6" fill="#e9a070" stroke="#333"/><rect x="243" y="18" width="3" height="3" fill="#fff" stroke="none"/><rect x="254" y="7" width="3" height="3" fill="#fff" stroke="none"/></g><path d="M944.500 4v20" stroke="#4aa0de"/><rect x="954.5" y="7.500" width="14" height="12" fill="#0079cb" stroke="#fff"/><rect x="955.5" y="8.500" width="12" height="10" fill="none" stroke="#1a2a3a"/><rect x="979.5" y="7.500" width="14" height="12" fill="#0079cb" stroke="#fff"/><rect x="980.5" y="8.500" width="12" height="10" fill="none" stroke="#1a2a3a"/><rect x="1004.5" y="7.500" width="14" height="12" fill="#0079cb" stroke="#fff"/><rect x="1005.5" y="8.500" width="12" height="10" fill="none" stroke="#1a2a3a"/><path d="M959.500 11.500l-2 2 2 2M964.500 11.500l2 2-2 2M984.500 11.500l2-2 2 2M984.500 15.500l2 2 2-2" fill="none" stroke="#fff"/><path d="M1008.500 10.500v6M1014.500 10.500v6M1011.500 12v1M1011.500 14.500v1" stroke="#fff" fill="none"/><path d="M1071 13.500h9" stroke="#fff" stroke-width="2.400"/><path d="M1085 13.500h102" stroke="#3f9ad8"/><rect x="1133.500" y="7" width="3" height="12" fill="#fff"/><path d="M1192 13.500h10M1197 8.500v10" stroke="#fff" stroke-width="2.400"/></svg>
<span class="pt" id="s1" style="left:22px;top:910.500px;color:#fff;transform:scaleX(0.982)">4,25 cm; 0,25 cm</span>
<span class="pt" id="s2" style="left:142px;top:910.500px;color:#fff;transform:scaleX(0.981)">6,75 cm; 1,5 cm</span>
<span class="pt" id="s3" style="left:261.5px;top:910.500px;color:#fff;transform:scaleX(0.944)">8 cm; 1 cm</span>
<span class="pt" id="s4" style="left:361px;top:910.500px;color:#fff;transform:scaleX(1.009)">Text1:&nbsp; [Categories.CategoryName]</span>
<span class="pt" id="s5" style="left:1030px;top:910.500px;color:#fff;transform:scaleX(0.986)">100%</span>
</body></html>
